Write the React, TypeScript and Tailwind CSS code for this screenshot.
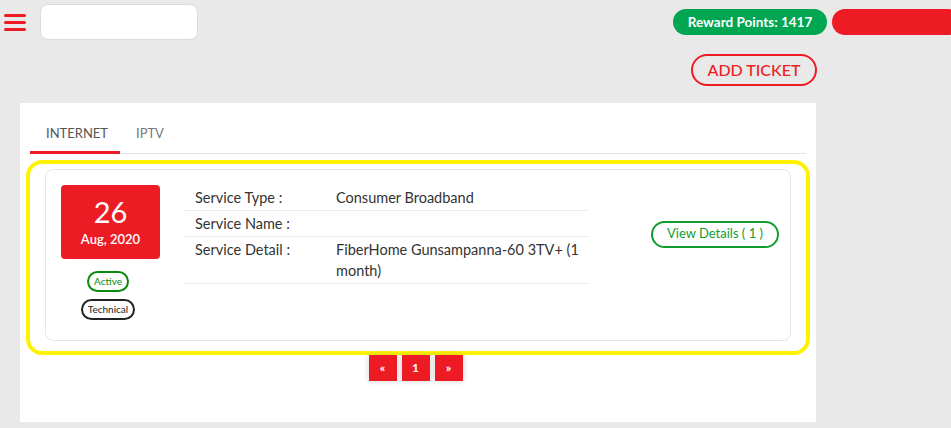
import React from 'react';

const rows = [
  { label: 'Service Type :', value: 'Consumer Broadband' },
  { label: 'Service Name :', value: '' },
  { label: 'Service Detail :', value: 'FiberHome Gunsampanna-60 3TV+ (1 month)' },
];

function Hamburger() {
  return (
    <div className="flex w-[22px] flex-col gap-[4px]">
      <span className="block h-[3px] rounded-sm bg-[#ed1c24]" />
      <span className="block h-[3px] rounded-sm bg-[#ed1c24]" />
      <span className="block h-[3px] rounded-sm bg-[#ed1c24]" />
    </div>
  );
}

export default function App() {
  return (
    <div className="min-h-screen w-[951px] overflow-hidden bg-[#e9e9e9] font-['Lato',sans-serif] text-[#333]">
      {/* top bar */}
      <div className="flex items-start pt-1 pl-1">
        <div className="mt-[10px]">
          <Hamburger />
        </div>
        <div className="ml-[14px] h-9 w-[158px] rounded-lg border border-[#dcdcdc] bg-white" />
        <div className="ml-auto mt-[5px] flex shrink-0 gap-[5px]">
          <div className="flex h-[26px] w-[154px] items-center justify-center rounded-full bg-[#00a651] text-[13.5px] font-bold text-white">
            Reward Points: 1417
          </div>
          <div className="-mr-[10px] h-[26px] w-[129px] rounded-full bg-[#ed1c24]" />
        </div>
      </div>

      <div className="ml-[20px] w-[796px]">
        <div className="mt-[14px] flex justify-end">
          <button className="-mr-px h-8 w-[126px] rounded-full border-2 border-[#ed1c24] text-[16px] font-medium text-[#ed1c24]">
            ADD TICKET
          </button>
        </div>

        {/* panel */}
        <div className="mt-[17px] h-[319px] bg-white p-[10px]">
          <div className="flex border-b border-[#e6e6e6] text-[13px]">
            <div className="-mb-px w-[90px] border-b-[3px] border-[#ed1c24] pt-[11px] pb-[7px] pl-4 text-[#555]">INTERNET</div>
            <div className="px-4 pt-[11px] pb-[7px] text-[#777]">IPTV</div>
          </div>

          <div className="-mx-1 mt-[6px] rounded-[16px] border-4 border-[#fff200] px-[15px] pt-[5px] pb-[10px]">
            <div className="flex rounded-lg border border-[#e6e6e6] pt-[15px] pr-[11px] pb-5 pl-[15px]">
              {/* date column */}
              <div className="flex w-[99px] flex-col items-center">
                <div className="flex h-[74px] w-[99px] flex-col items-center justify-center rounded bg-[#ed1c24] text-white">
                  <div className="text-[29px] leading-8">26</div>
                  <div className="mt-[3px] text-[13px] font-semibold leading-4">Aug, 2020</div>
                </div>
                <div className="mt-3 -ml-[5px] flex h-[21px] items-center rounded-full border-2 border-[#0a8a0a] px-[5px] text-[10px] text-[#0a8a0a]">
                  Active
                </div>
                <div className="mt-[7px] -ml-[5px] flex h-[21px] items-center rounded-full border-2 border-[#222] px-[5px] text-[10px] text-[#222]">
                  Technical
                </div>
              </div>

              {/* details */}
              <div className="ml-6 flex flex-1 items-center self-start">
                <div className="w-[405px] text-[14.5px]">
                  {rows.map((r) => (
                    <div key={r.label} className="flex border-b border-[#eeeeee] py-[2px] leading-[21px]">
                      <div className="w-[152px] shrink-0 pl-[11px]">{r.label}</div>
                      <div className="w-[250px]">{r.value}</div>
                    </div>
                  ))}
                </div>
                <button className="ml-auto h-[27px] w-[128px] rounded-full border-2 border-[#129c2f] text-[13px] text-[#129c2f]">
                  View Details ( 1 )
                </button>
              </div>
            </div>
          </div>

          {/* pagination */}
          <div className="flex justify-center gap-[5px] pr-[5px]">
            <div className="flex h-[26px] w-[28px] items-center justify-center bg-[#ed1c24] text-[12px] font-bold text-white shadow-[0_0_6px_rgba(0,0,0,0.18)]">«</div>
            <div className="flex h-[26px] w-[28px] items-center justify-center bg-[#ed1c24] text-[12px] font-bold text-white shadow-[0_0_6px_rgba(0,0,0,0.18)]">1</div>
            <div className="flex h-[26px] w-[28px] items-center justify-center bg-[#ed1c24] text-[12px] font-bold text-white shadow-[0_0_6px_rgba(0,0,0,0.18)]">»</div>
          </div>
        </div>
      </div>
    </div>
  );
}
